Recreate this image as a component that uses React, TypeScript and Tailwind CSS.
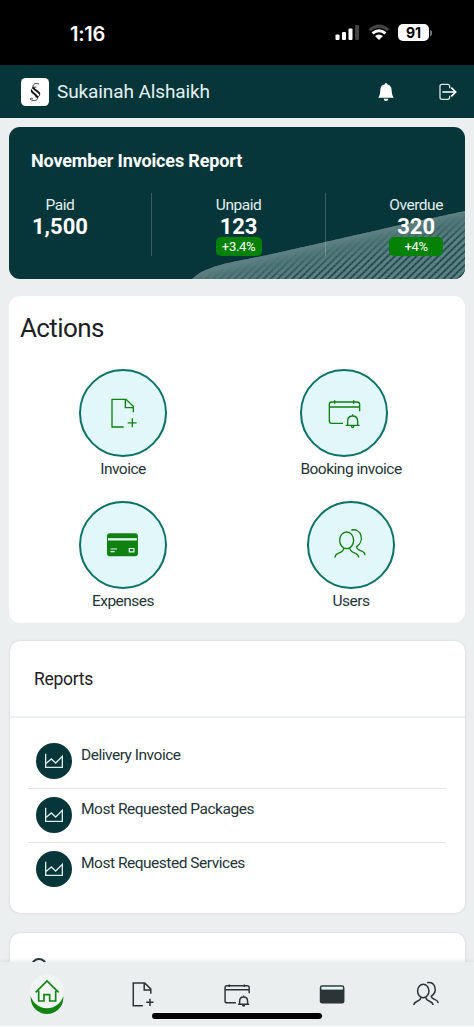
import type { ReactNode } from 'react';
import { BsBellFill } from 'react-icons/bs';

interface IconProps {
  size: number;
  stroke?: number;
  plain?: boolean;
}

function FileAddIcon({ size, stroke = 4 }: IconProps) {
  return (
    <svg width={size} height={size} viewBox="324 324 90 90" fill="none" stroke="currentColor" strokeWidth={stroke} overflow="visible">
      <path d="M371 411H336V328H378L400 349V367M376 330V353H399M397 385V412M383 398.5H410" />
    </svg>
  );
}

function BookingIcon({ size, stroke = 4 }: IconProps) {
  return (
    <svg width={size} height={size} viewBox="273 319 100 100" fill="none" stroke="currentColor" strokeWidth={stroke} overflow="visible">
      <path d="M318 401H284Q277 401 277 394V344Q277 337 284 337H361Q368 337 368 344V365M277 352H368M293 332V342M350 332V342" />
      <path d="M326 407H368M332 406V395C332 383 338 379 347 379S362 383 362 395V406M343 409Q347 418 351 409M347 374V379" />
    </svg>
  );
}

function CardIcon({ size, plain }: IconProps) {
  return (
    <svg width={size} height={size} viewBox="319 146 100 100">
      <rect x="322" y="162" width="93" height="69" rx="9" fill="currentColor" />
      <path d={plain ? 'M328 173H409' : 'M325 180H412'} stroke="#e3f6f7" strokeWidth={plain ? 11 : 7} />
      {!plain && (
        <path d="M333 209H352M332 217H345M389 207.500H403V217.500H389Z" fill="none" stroke="#e3f6f7" strokeWidth="3.500" />
      )}
    </svg>
  );
}

function UsersIcon({ size, stroke = 4 }: IconProps) {
  return (
    <svg width={size} height={size} viewBox="293 146 100 100" fill="none" stroke="currentColor" strokeWidth={stroke} overflow="visible">
      <ellipse cx="331" cy="183" rx="21" ry="25" />
      <path d="M296 235C295 218 322 224 322 207M341 207C341 224 368 218 367 235M345 152C377 146 385 186 361 202C360 217 387 211 386 228" />
    </svg>
  );
}

function ChartIcon() {
  return (
    <svg width="18" height="18" viewBox="135 337 54 54" fill="none" stroke="#dcebeb" strokeWidth="4" overflow="visible">
      <path d="M137 342V383H187V350L167 370L154 358L139 371" />
    </svg>
  );
}

function HomeIcon() {
  return (
    <svg width="34" height="40" viewBox="91 432 102 120" fill="none">
      <circle cx="142" cy="503" r="49" fill="#138413" />
      <ellipse cx="142" cy="484" rx="51" ry="51" fill="#f1f4f4" />
      <path d="M108 487L142 453L177 487M117 482V513H133V494H150V513H168V482" stroke="#138413" strokeWidth="5" />
    </svg>
  );
}

function ExitIcon() {
  return (
    <svg width="18" height="18" viewBox="606 248 54 54" fill="none" stroke="#fff" strokeWidth="4">
      <path d="M638 264V258Q638 252 632 252H615Q609 252 609 258V291Q609 297 615 297H632Q638 297 638 291V286" opacity=".85" />
      <path d="M616 275H656M643 262L656 275L643 288" strokeWidth="5" />
    </svg>
  );
}

function Logo() {
  return (
    <svg width="28" height="28" viewBox="0 0 84 84" fill="none" stroke="#111" strokeLinecap="round">
      <rect width="84" height="84" rx="14" fill="#fff" stroke="none" />
      <path d="M53 18C44 13 34 19 36 28C38 36 55 39 56 48C57 57 46 60 42 55" strokeWidth="2.500" />
      <path d="M45 27C35 27 29 34 32 41C35 48 49 50 50 59C51 67 39 70 29 65C25 62 31 58 35 62" strokeWidth="2.500" />
      <path d="M37 29C39 35 51 39 55 46M32 39C34 46 46 50 49 57" strokeWidth="5.500" />
    </svg>
  );
}

function StatusBar() {
  return (
    <div className="flex h-[65px] items-center bg-black pl-[70px] pr-[42px] text-white">
      <span className="mt-[2px] font-[Inter,sans-serif] text-[20px] font-semibold tracking-[-0.3px]">1:16</span>
      <svg className="ml-auto" width="25" height="17" viewBox="0 0 25 17" fill="#fff">
        <rect x="0.500" y="10.500" width="4" height="5.500" rx="1" />
        <rect x="7" y="8" width="4" height="8" rx="1" />
        <rect x="13.500" y="4.500" width="4" height="11.500" rx="1" />
        <rect x="20" y="1" width="4" height="15" rx="1" fill="#444" />
      </svg>
      <svg className="ml-2" width="22" height="17" viewBox="0 0 22 17" fill="none" strokeWidth="3">
        <path d="M1.500 6.200Q11 -2 20.500 6.200" stroke="#444" />
        <path d="M4.500 9.400Q11 4 17.500 9.400" stroke="#fff" />
        <path d="M7 12Q11 9 15 12L11 16Z" fill="#fff" />
      </svg>
      <div className="ml-2 flex h-[17px] w-[31px] items-center justify-center rounded-[5px] bg-white font-[Inter,sans-serif] text-[14px] font-bold leading-none text-black">
        91
      </div>
      <div className="ml-px h-[6px] w-[2px] rounded-r bg-[#777]" />
    </div>
  );
}

const STATS = [
  { label: 'Paid', value: '1,500', change: '' },
  { label: 'Unpaid', value: '123', change: '+3.4%' },
  { label: 'Overdue', value: '320', change: '+4%' },
];

function Mesh() {
  return (
    <svg className="absolute inset-0" width="456" height="152" viewBox="0 0 456 152">
      <defs>
        <pattern id="ribs" width="5" height="4" patternUnits="userSpaceOnUse" patternTransform="rotate(46)">
          <rect width="5" height="4" fill="#5f8284" />
          <rect width="2" height="4" fill="#1f4c4f" />
          <rect width="5" height="1" fill="#4c7173" opacity=".4" />
        </pattern>
        <linearGradient id="edge" gradientUnits="userSpaceOnUse" x1="330" y1="114" x2="336" y2="140">
          <stop offset="0" stopColor="#5d7f81" />
          <stop offset="0.300" stopColor="#4f7476" stopOpacity=".8" />
          <stop offset="1" stopColor="#4f7476" stopOpacity="0" />
        </linearGradient>
      </defs>
      <path d="M183 152C193 142 210 138 228 134C282 124 360 104 456 84V152Z" fill="url(#ribs)" />
      <path d="M183 152C193 142 210 138 228 134C282 124 360 104 456 84V152Z" fill="url(#edge)" />
    </svg>
  );
}

function InvoiceSummary() {
  return (
    <section className="relative h-[152px] overflow-hidden rounded-[11px] bg-[#063639] text-white">
      <Mesh />
      <div className="relative pl-[23px] pr-[22px] pt-[22px]">
        <h2 className="-ml-px text-[18px] font-bold leading-6 tracking-[-0.15px]">November Invoices Report</h2>
        <div className="mt-5 flex justify-between">
          {STATS.map(({ label, value, change }, i) => (
            <div key={label} className="contents">
              {i > 0 && <div className="h-[63px] w-px bg-white/20" />}
              <div className="flex flex-col items-center">
                <span className="pt-px text-[15.5px] leading-[23px] tracking-[-0.45px] text-[#e3eeee]">{label}</span>
                <span className="text-[22px] font-bold leading-[20px]">{value}</span>
                {change && (
                  <span className="flex h-[19px] min-w-[46px] items-center justify-center self-stretch rounded-[5px] bg-[#058205] text-[13px] tracking-[-0.3px]">
                    {change}
                  </span>
                )}
              </div>
            </div>
          ))}
        </div>
      </div>
    </section>
  );
}

const ACTIONS: { label: string; icon: ReactNode }[] = [
  { label: 'Invoice', icon: <FileAddIcon size={30} /> },
  { label: 'Booking invoice', icon: <BookingIcon size={33.3} /> },
  { label: 'Expenses', icon: <CardIcon size={33.3} /> },
  { label: 'Users', icon: <UsersIcon size={33.3} /> },
];

function Actions() {
  return (
    <section className="mt-[17px] h-[327px] rounded-[11px] bg-white">
      <h2 className="pl-[11px] pt-[14px] text-[26px] leading-9 tracking-[-0.6px] text-[#1c2022]">Actions</h2>
      <div className="mt-[23px] grid grid-cols-2 justify-items-center gap-y-[18px]">
        {ACTIONS.map(({ label, icon }) => (
          <div key={label} className="h-[114px]">
            <div className="flex size-[88px] items-center justify-center rounded-full border-2 border-[#0b7267] bg-[#e1f7f9] text-[#108010]">
              {icon}
            </div>
            <div className="whitespace-nowrap text-center text-[15.5px] leading-6 tracking-[-0.5px] text-[#1e3437]">{label}</div>
          </div>
        ))}
      </div>
    </section>
  );
}

const REPORTS = ['Delivery Invoice', 'Most Requested Packages', 'Most Requested Services'];

function Reports() {
  return (
    <section className="ml-px mt-[18px] h-[272px] rounded-[10px] bg-white shadow-[0_0_3px_rgba(0,0,0,0.12)]">
      <h3 className="flex h-[77px] items-center border-b-2 border-[#edf1f1] pl-6 pt-px text-[17.5px] tracking-[-0.3px] text-[#1c2022]">
        Reports
      </h3>
      <ul className="ml-[18px] mr-[19px] pt-[17px]">
        {REPORTS.map(report => (
          <li key={report} className="flex h-[54px] gap-[9px] border-b border-[#dfe3e4] pl-2 pt-[8px] last:border-0">
            <span className="flex size-9 flex-shrink-0 items-center justify-center rounded-full bg-[#063639]">
              <ChartIcon />
            </span>
            <span className="text-[15.5px] leading-6 tracking-[-0.48px] text-[#1e3437]">{report}</span>
          </li>
        ))}
      </ul>
    </section>
  );
}

function BottomNav() {
  return (
    <nav className="relative h-[65px] border-b-2 border-[#f5f8f8] bg-[#eaeeef] shadow-[0_-1px_4px_rgba(0,0,0,0.08)]">
      <div className="grid grid-cols-5 pt-3 text-[#2b3437]">
        <div className="flex h-10 items-center justify-center"><HomeIcon /></div>
        <div className="flex h-10 items-center justify-center"><FileAddIcon size={24.6} stroke={5.5} /></div>
        <div className="flex h-10 items-center justify-center"><BookingIcon size={26.5} stroke={5.5} /></div>
        <div className="flex h-10 items-center justify-center"><CardIcon size={26.5} plain /></div>
        <div className="flex h-10 items-center justify-center"><UsersIcon size={27} stroke={5.5} /></div>
      </div>
      <div className="absolute bottom-[6px] left-[152px] h-[6px] w-[170px] rounded-full bg-black" />
    </nav>
  );
}

export default function App() {
  return (
    <div className="flex h-[1027px] w-[474px] flex-col overflow-hidden bg-[#ebeff0] font-[Roboto,sans-serif]">
      <StatusBar />

      {/* Header */}
      <header className="flex h-[53px] flex-shrink-0 items-center bg-[#063639] pl-[21px] pr-[17px] text-white">
        <Logo />
        <h1 className="ml-2 pt-px text-[19px] tracking-[-0.1px] text-[#e4f0f0]">Sukainah Alshaikh</h1>
        <BsBellFill className="ml-auto mr-[44px]" size={18} />
        <ExitIcon />
      </header>

      <main className="h-[844px] flex-shrink-0 overflow-hidden pl-[9px] pr-[9px] pt-[9px]">
        <InvoiceSummary />
        <Actions />
        <Reports />
        <section className="ml-px mt-[20px] h-20 rounded-[10px] bg-white pl-[21px] pt-[25px] shadow-[0_0_3px_rgba(0,0,0,0.12)]">
          <div className="size-[16px] rounded-full border-2 border-[#26383b]" />
        </section>
      </main>

      <BottomNav />
    </div>
  );
}
